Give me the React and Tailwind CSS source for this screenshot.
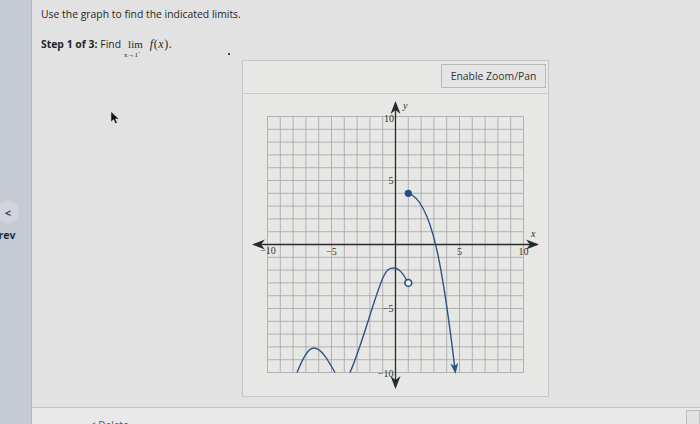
import React from 'react';

const ox = 395.5;
const oy = 244.5;
const u = 12.8;
const X = (v) => ox + u * v;
const Y = (v) => oy - u * v;

function Graph() {
    const ticks = Array.from({ length: 21 }, (_, i) => i - 10);
    const ink = '#2a2a2a';
    const blue = '#2f5382';
    return (
        <svg width="305" height="302" className="block">
            <g transform="translate(-243,-94)">
                {ticks.map((t) => (
                    <line key={'v' + t} x1={X(t)} y1={Y(10)} x2={X(t)} y2={Y(-10)} stroke="#a3a3a3" strokeWidth="0.8" />
                ))}
                {ticks.map((t) => (
                    <line key={'h' + t} x1={X(-10)} y1={Y(t)} x2={X(10)} y2={Y(t)} stroke="#a3a3a3" strokeWidth="0.8" />
                ))}

                {/* axes */}
                <line x1="254" y1={oy} x2="537" y2={oy} stroke={ink} strokeWidth="1.3" />
                <line x1={ox} y1="103" x2={ox} y2="387" stroke={ink} strokeWidth="1.3" />
                <polygon points="252,244.5 265,239.5 261,244.5 265,249.5" fill={ink} />
                <polygon points="539,244.5 526,239.5 530,244.5 526,249.5" fill={ink} />
                <polygon points="395.5,101 390.5,114 395.5,110 400.5,114" fill={ink} />
                <polygon points="395.5,389 390.5,376 395.5,380 400.5,376" fill={ink} />

                {/* labels */}
                <g fontFamily='"Liberation Serif", serif' fontSize="10" fill="#333">
                    <text x="394" y="122" textAnchor="end">10</text>
                    <text x="393.5" y="184" textAnchor="end">5</text>
                    <text x="393.5" y="312" textAnchor="end">−5</text>
                    <text x="393.5" y="377" textAnchor="end">−10</text>
                    <text x="268" y="254" textAnchor="middle">−10</text>
                    <text x="331.5" y="255" textAnchor="middle">−5</text>
                    <text x="459.5" y="255" textAnchor="middle">5</text>
                    <text x="523.5" y="255" textAnchor="middle">10</text>
                    <text x="531" y="237" fontStyle="italic">x</text>
                    <text x="403" y="109" fontStyle="italic">y</text>
                </g>

                {/* curves */}
                <g fill="none" stroke={blue} strokeWidth="1.4">
                    <path d="M 297 372.5 C 303 358, 308 348, 314 348 C 321 348, 328 360, 335 372.5" />
                    <path d="M 350 372.5 C 362 345, 372 305, 382 280 C 387 268, 390 268, 394 268 C 399 268, 404 275, 406.8 280.5" />
                    <path d="M 408.3 193.3 C 432 200, 443 270, 454.6 366" />
                </g>
                <polygon points="455.5,374 458.3,362.7 454.6,366 450.3,363.5" fill={blue} />
                <circle cx={X(1)} cy={Y(4)} r="3.6" fill="#1f4f86" />
                <circle cx={X(1)} cy={Y(-3)} r="3.4" fill="#eeeeee" stroke="#1f4f86" strokeWidth="1.6" />
            </g>
        </svg>
    );
}

function App() {
    const sans = { fontFamily: '"Open Sans", "Liberation Sans", sans-serif' };
    return (
        <div className="w-[700px] h-[424px] flex overflow-hidden bg-[#e2e2e2]" style={sans}>
            <div className="w-[32px] shrink-0 bg-[#c6cad2] border-r border-[#b3b7bf] flex flex-col">
                <div className="mt-[201px] ml-[-3px] w-[22px] h-[22px] rounded-full bg-[#d1d4da] flex items-center justify-center text-[#2c3d5e] text-[11px] font-bold leading-none">
                    &lt;
                </div>
                <div className="mt-[6px] ml-[-8px] text-[10.5px] font-bold leading-[12px] text-[#1f2d4a]">Prev</div>
            </div>

            <div className="flex-1 flex flex-col relative">
                <div className="h-[3px] bg-[#cbcbcb]" />
                <div className="ml-[9px] mt-[7px] h-[14px] text-[10.4px] leading-[14px] text-[#262626]">
                    Use the graph to find the indicated limits.
                </div>
                <div className="ml-[9px] mt-[16px] h-[14px] flex items-baseline text-[10.4px] leading-[14px] text-[#262626]">
                    <span className="font-bold">Step 1 of 3:</span>
                    <span className="ml-[3px]">Find</span>
                    <span className="relative ml-[7px] text-[11px] leading-[12px]" style={{ fontFamily: '"Liberation Serif", serif' }}>
                        lim
                        <span className="absolute left-[-4px] top-[14px] text-[7px] leading-[7px] whitespace-nowrap">
                            x→1⁻
                        </span>
                    </span>
                    <span className="ml-[7px] text-[12px] italic tracking-[0.6px]" style={{ fontFamily: '"Liberation Serif", serif' }}>
                        f<span className="not-italic">(</span>x<span className="not-italic">).</span>
                    </span>
                    <span className="ml-[56px] w-[2px] h-[2px] bg-[#444] self-end translate-y-[4px]" />
                </div>

                <div className="ml-[210px] mt-[9px] w-[307px] h-[337px] border border-[#c6c6c6] bg-[#e7e7e6] flex flex-col">
                    <div className="h-[33px] border-b border-[#cbcbcb] flex justify-end items-start pt-[3px] pr-[2px]">
                        <button className="w-[105px] h-[24px] border border-[#b9b9b9] bg-[#e4e4e4] text-[10.4px] text-[#333] leading-none">
                            Enable Zoom/Pan
                        </button>
                    </div>
                    <Graph />
                </div>

                <div className="mt-[10px] flex-1 border-t border-[#c4c4c4] bg-[#e9e9e9] flex justify-between items-start">
                    <div className="flex items-center mt-[11px] text-[10px] leading-[12px] text-[#555]">
                        <span className="ml-[12px] w-[2px] h-[2px] bg-[#555]" />
                        <span className="ml-[44px]">&lt; Delete</span>
                    </div>
                    <div className="mt-[2px] w-[14px] h-[16px] border border-[#bdbdbd] bg-[#e2e2e2]" />
                </div>

                <svg className="absolute left-[78px] top-[111px]" width="10" height="13" viewBox="0 0 10 13">
                    <polygon points="1,0.5 1,11 3.6,8.6 5.4,12.6 7.2,11.8 5.4,7.9 8.8,7.9" fill="#111" stroke="#ddd" strokeWidth="0.5" />
                </svg>
            </div>
        </div>
    );
}

export default App;
